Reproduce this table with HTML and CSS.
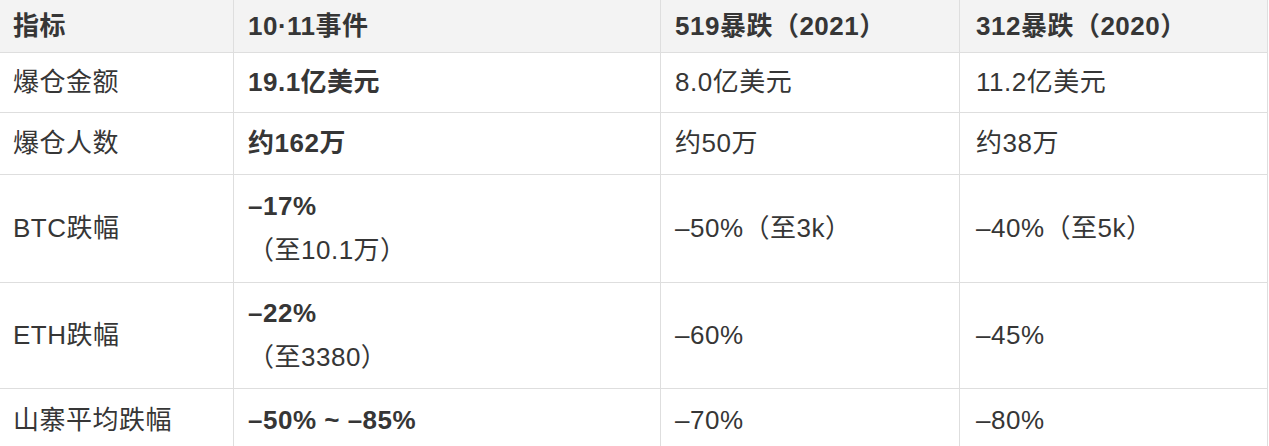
FILE: index.html
```html
<!DOCTYPE html>
<html lang="zh">
<head>
<meta charset="utf-8">
<link rel="stylesheet" href="styles.css">
</head>
<body>
<table class="cmp">
  <colgroup>
    <col class="c1"><col class="c2"><col class="c3"><col class="c4">
  </colgroup>
  <thead>
    <tr class="h-head">
      <th>指标</th><th>10·11事件</th><th>519暴跌（2021）</th><th>312暴跌（2020）</th>
    </tr>
  </thead>
  <tbody>
    <tr class="h-60">
      <td>爆仓金额</td><td class="b">19.1亿美元</td><td>8.0亿美元</td><td>11.2亿美元</td>
    </tr>
    <tr class="h-62">
      <td>爆仓人数</td><td class="b">约162万</td><td>约50万</td><td>约38万</td>
    </tr>
    <tr class="h-108">
      <td>BTC跌幅</td><td><div class="b">–17%</div><div>（至10.1万）</div></td><td>–50%（至3k）</td><td>–40%（至5k）</td>
    </tr>
    <tr class="h-106">
      <td>ETH跌幅</td><td><div class="b">–22%</div><div>（至3380）</div></td><td>–60%</td><td>–45%</td>
    </tr>
    <tr class="h-64">
      <td>山寨平均跌幅</td><td class="b">–50% ~ –85%</td><td>–70%</td><td>–80%</td>
    </tr>
  </tbody>
</table>
</body>
</html>
```
FILE: styles.css
```css
html, body {
  margin: 0;
  padding: 0;
  background: #ffffff;
  overflow: hidden;
}
body {
  font-family: "Liberation Sans", "Noto Sans CJK SC", sans-serif;
  color: #363636;
}
.cmp {
  border-collapse: collapse;
  table-layout: fixed;
  width: 1268px;
  margin-left: -1px;
  font-size: 26px;
  letter-spacing: 0.5px;
}
.c1 { width: 234px; }
.c2 { width: 427px; }
.c3 { width: 299px; }
.c4 { width: 308px; }
.cmp th, .cmp td {
  border: 1px solid #dedede;
  padding: 0 14px;
  text-align: left;
  vertical-align: middle;
  line-height: 44px;
  white-space: nowrap;
}
.cmp th {
  background: #f3f3f3;
  font-weight: 700;
  color: #363636;
}
.cmp tr > :first-child { padding-left: 13px; }
.cmp tr > :last-child { padding-left: 16px; }
.cmp thead th { border-top: 0; }
.b { font-weight: 700; }
.h-head { height: 52px; }
.h-60 { height: 60px; }
.h-62 { height: 62px; }
.h-108 { height: 108px; }
.h-106 { height: 106px; }
.h-64 { height: 64px; }
```
